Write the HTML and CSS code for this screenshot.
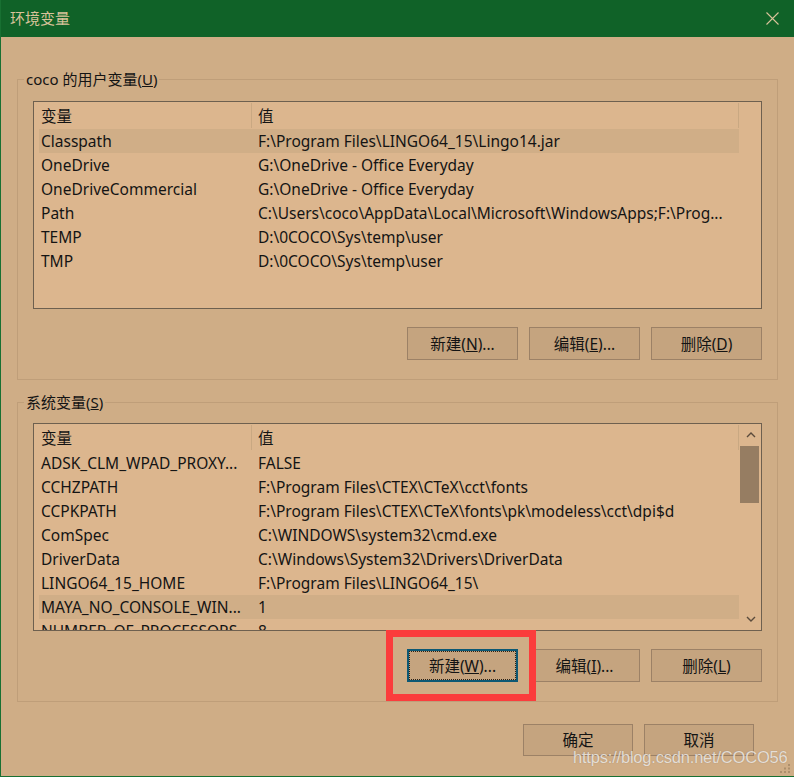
FILE: index.html
```html
<!DOCTYPE html>
<html lang="zh-CN">
<head>
    <meta charset="UTF-8">
    <meta name="viewport" content="width=device-width, initial-scale=1.0">
    <link rel="stylesheet" href="styles.css">
    <title>环境变量</title>
</head>
<body>
    <div class="window">
        <div class="titlebar">
            <span class="title">环境变量</span>
            <svg class="close" width="13" height="13" viewBox="0 0 13 13">
                <path d="M0.5 0.5 L12.5 12.5 M12.5 0.5 L0.5 12.5" stroke="#d9c29a" stroke-width="1.1" fill="none"/>
            </svg>
        </div>

        <div class="content">
            <fieldset class="group">
                <legend>coco 的用户变量(<u>U</u>)</legend>
                <div class="list">
                    <div class="list-main">
                        <div class="list-head">
                            <span class="head-name">变量</span>
                            <span class="head-value">值</span>
                        </div>
                        <div class="row selected"><span class="name">Classpath</span><span class="value">F:\Program Files\LINGO64_15\Lingo14.jar</span></div>
                        <div class="row"><span class="name">OneDrive</span><span class="value">G:\OneDrive - Office Everyday</span></div>
                        <div class="row"><span class="name">OneDriveCommercial</span><span class="value">G:\OneDrive - Office Everyday</span></div>
                        <div class="row"><span class="name">Path</span><span class="value">C:\Users\coco\AppData\Local\Microsoft\WindowsApps;F:\Prog...</span></div>
                        <div class="row"><span class="name">TEMP</span><span class="value">D:\0COCO\Sys\temp\user</span></div>
                        <div class="row"><span class="name">TMP</span><span class="value">D:\0COCO\Sys\temp\user</span></div>
                    </div>
                    <div class="gutter"></div>
                </div>
                <div class="buttons">
                    <button class="btn">新建(<u>N</u>)...</button>
                    <button class="btn">编辑(<u>E</u>)...</button>
                    <button class="btn">删除(<u>D</u>)</button>
                </div>
            </fieldset>

            <fieldset class="group system">
                <legend>系统变量(<u>S</u>)</legend>
                <div class="list">
                    <div class="list-main">
                        <div class="list-head">
                            <span class="head-name">变量</span>
                            <span class="head-value">值</span>
                        </div>
                        <div class="row"><span class="name">ADSK_CLM_WPAD_PROXY...</span><span class="value">FALSE</span></div>
                        <div class="row"><span class="name">CCHZPATH</span><span class="value">F:\Program Files\CTEX\CTeX\cct\fonts</span></div>
                        <div class="row"><span class="name">CCPKPATH</span><span class="value">F:\Program Files\CTEX\CTeX\fonts\pk\modeless\cct\dpi$d</span></div>
                        <div class="row"><span class="name">ComSpec</span><span class="value">C:\WINDOWS\system32\cmd.exe</span></div>
                        <div class="row"><span class="name">DriverData</span><span class="value">C:\Windows\System32\Drivers\DriverData</span></div>
                        <div class="row"><span class="name">LINGO64_15_HOME</span><span class="value">F:\Program Files\LINGO64_15\</span></div>
                        <div class="row selected"><span class="name">MAYA_NO_CONSOLE_WIN...</span><span class="value">1</span></div>
                        <div class="row"><span class="name">NUMBER_OF_PROCESSORS</span><span class="value">8</span></div>
                    </div>
                    <div class="gutter scrollbar">
                        <div class="arrow">
                            <svg width="10" height="6" viewBox="0 0 10 6"><path d="M1 5 L5 1 L9 5" stroke="#5b4b3c" stroke-width="1.4" fill="none"/></svg>
                        </div>
                        <div class="thumb"></div>
                        <div class="track"></div>
                        <div class="arrow">
                            <svg width="10" height="6" viewBox="0 0 10 6"><path d="M1 1 L5 5 L9 1" stroke="#5b4b3c" stroke-width="1.4" fill="none"/></svg>
                        </div>
                    </div>
                </div>
                <div class="buttons">
                    <button class="btn focused">新建(<u>W</u>)...</button>
                    <button class="btn">编辑(<u>I</u>)...</button>
                    <button class="btn">删除(<u>L</u>)</button>
                </div>
            </fieldset>

            <div class="dialog-buttons">
                <button class="btn">确定</button>
                <button class="btn">取消</button>
            </div>
        </div>

        <div class="highlight"></div>
        <div class="watermark">https://blog.csdn.net/COCO56</div>
        <svg class="grip" width="12" height="9" viewBox="0 0 12 9">
            <rect x="9" y="0" width="2" height="2" fill="#ad8f6c"/>
            <rect x="5" y="3.5" width="2" height="2" fill="#ad8f6c"/>
            <rect x="9" y="3.5" width="2" height="2" fill="#ad8f6c"/>
            <rect x="1" y="7" width="2" height="2" fill="#ad8f6c"/>
            <rect x="5" y="7" width="2" height="2" fill="#ad8f6c"/>
            <rect x="9" y="7" width="2" height="2" fill="#ad8f6c"/>
        </svg>
    </div>
</body>
</html>
```

FILE: styles.css
```css
body{
    margin: 0;
    padding: 0;
    background-color: #cfad86;
    font-family: "Noto Sans", "Noto Sans CJK SC", sans-serif;
    font-size: 15.5px;
    color: #141414;
}

.window{
    position: relative;
    width: 794px;
    height: 777px;
    box-sizing: border-box;
    border-left: 1px solid #187032;
    border-bottom: 1px solid #187032;
    background-color: #cfad86;
    overflow: hidden;
}

.titlebar{
    height: 37px;
    background-color: #106228;
    display: flex;
    justify-content: space-between;
    align-items: center;
    margin-left: -1px;
}

.title{
    padding-left: 10px;
    color: #d9c29a;
    font-size: 15px;
    line-height: 37px;
}

.close{
    margin-right: 15px;
    margin-top: -1px;
}

.content{
    padding: 32px 16px 0 16px;
}

/* group boxes */

.group{
    margin: 0;
    padding: 12px 15px 19px 15px;
    border: 1px solid #bf9e79;
    min-width: 0;
}

.group legend{
    margin-left: -9px;
    padding: 0 2px;
    line-height: 20px;
    font-size: 15px;
    margin-top: -1px;
}

.group.system{
    margin-top: 12px;
    padding-top: 11px;
}

/* list view */

.list{
    height: 208px;
    box-sizing: border-box;
    border: 1px solid #6e604f;
    background-color: #dcb68e;
    display: flex;
    overflow: hidden;
}

.list-main{
    flex: 1;
    min-width: 0;
}

.gutter{
    width: 22px;
    flex-shrink: 0;
}

.list-head{
    display: flex;
    height: 27px;
    align-items: flex-start;
}

.head-name, .head-value{
    height: 25px;
    margin-top: 1px;
    line-height: 27px;
    border-right: 1px solid #c9a882;
    box-sizing: border-box;
}

.head-name{
    width: 218px;
    padding-left: 7px;
}

.head-value{
    flex: 1;
    padding-left: 6px;
}

.row{
    display: flex;
    height: 24px;
    line-height: 24px;
    margin-left: 5px;
    white-space: nowrap;
}

.row.selected{
    background-color: #d0ae87;
}

.row .name{
    width: 212px;
    flex-shrink: 0;
    box-sizing: border-box;
    padding-left: 2px;
    overflow: hidden;
    text-overflow: ellipsis;
}

.row .value{
    flex: 1;
    min-width: 0;
    padding-left: 7px;
    overflow: hidden;
    text-overflow: ellipsis;
}

/* scrollbar */

.scrollbar{
    display: flex;
    flex-direction: column;
    padding-left: 1px;
    box-sizing: border-box;
}

.arrow{
    height: 22px;
    display: flex;
    justify-content: center;
    align-items: center;
}

.thumb{
    height: 57px;
    width: 19px;
    background-color: #967d62;
}

.track{
    flex: 1;
}

/* buttons */

.buttons{
    display: flex;
    justify-content: flex-end;
    gap: 11px;
    margin-top: 18px;
}

.btn{
    width: 111px;
    height: 33px;
    margin: 0;
    padding: 0;
    box-sizing: border-box;
    background-color: #c5a47f;
    border: 1px solid #9c8166;
    font-family: "Noto Sans", "Noto Sans CJK SC", sans-serif;
    font-size: 15.5px;
    color: #141414;
    line-height: 30px;
}

.btn.focused{
    border: 2px solid #0d5874;
    outline: 1px dotted #2a2218;
    outline-offset: -3px;
}

.dialog-buttons{
    display: flex;
    justify-content: flex-end;
    gap: 11px;
    margin-top: 22px;
    padding-right: 24px;
}

.dialog-buttons .btn{
    width: 110px;
    height: 32px;
}

/* overlays */

.highlight{
    position: absolute;
    left: 385px;
    top: 630px;
    width: 150px;
    height: 71px;
    box-sizing: border-box;
    border: 7px solid #fb3c3c;
}

.watermark{
    position: absolute;
    left: 572px;
    top: 748px;
    font-family: "Liberation Sans", Arial, sans-serif;
    font-size: 16.5px;
    letter-spacing: -0.2px;
    color: rgba(255, 255, 255, 0.72);
    text-shadow: 0 0 1px rgba(120, 100, 80, 0.6);
    white-space: nowrap;
}

.grip{
    position: absolute;
    right: 3px;
    bottom: 3px;
}
```
